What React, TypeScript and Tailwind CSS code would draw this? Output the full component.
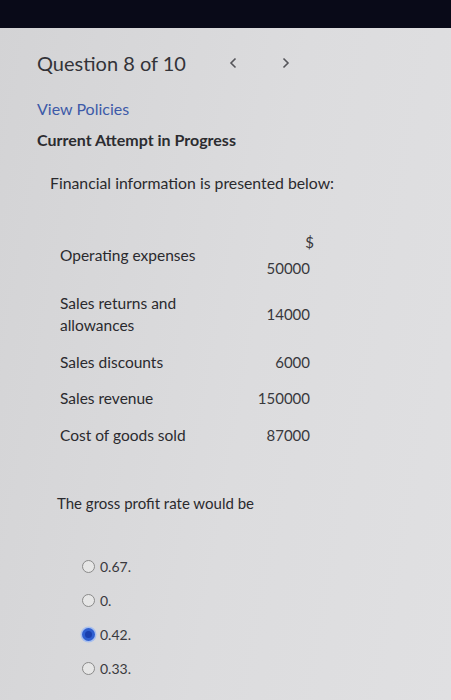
const rows = [
  { label: ['Operating expenses'], value: '50000', dollar: true },
  { label: ['Sales returns and', 'allowances'], value: '14000' },
  { label: ['Sales discounts'], value: '6000' },
  { label: ['Sales revenue'], value: '150000' },
  { label: ['Cost of goods sold'], value: '87000' },
];

const rowClass = [
  'h-[44px] mb-[15px]',
  'h-[44px] mb-[14px]',
  'h-[24px] mb-[12px]',
  'h-[24px] mb-[13px]',
  'h-[24px]',
];

const options = [
  { text: '0.67.', checked: false },
  { text: '0.', checked: false },
  { text: '0.42.', checked: true },
  { text: '0.33.', checked: false },
];

function Radio({ checked }: { checked: boolean }) {
  return (
    <span
      className={
        checked
          ? 'w-[13px] h-[13px] rounded-full border-[3px] border-[#2f5fd0] bg-[#1a3fae] shadow-[0_0_0_1.5px_#a9c0ee]'
          : 'w-[13px] h-[13px] rounded-full border border-[#8a8a8a] bg-[#e6e6e6]'
      }
    />
  );
}

function Chevron({ dir }: { dir: 'left' | 'right' }) {
  return (
    <svg viewBox="0 0 8 12" className="w-[8px] h-[12px]" fill="none" stroke="#55555a" strokeWidth="1.6">
      <path d={dir === 'left' ? 'M6.5 1.5 2 6l4.5 4.5' : 'M1.5 1.5 6 6l-4.5 4.5'} />
    </svg>
  );
}

export default function App() {
  return (
    <div
      className="w-[451px] h-[700px] overflow-hidden bg-[linear-gradient(100deg,#d3d3d5_0%,#dcdcde_55%,#e0e0e2_100%)] text-[#2a2a2e]"
      style={{ fontFamily: 'Lato, "Open Sans", sans-serif' }}
    >
      <div className="h-[28px] bg-[#090a18]" />

      <div className="flex items-center pl-[37px] mt-[21px] h-[28px]">
        <h1 className="text-[20px] leading-none text-[#333338]">Question 8 of 10</h1>
        <span className="ml-[43px]">
          <Chevron dir="left" />
        </span>
        <span className="ml-[45px]">
          <Chevron dir="right" />
        </span>
      </div>

      <div className="pl-[37px] mt-[24px] text-[16px] leading-none text-[#3d5aa8]">View Policies</div>
      <div className="pl-[37px] mt-[15px] text-[16px] leading-none font-bold text-[#2c2c30]">
        Current Attempt in Progress
      </div>

      <p className="pl-[50px] mt-[27px] text-[15.8px] leading-none">Financial information is presented below:</p>

      <div className="ml-[60px] mt-[42px] w-[250px] flex flex-col text-[15.5px]">
        {rows.map((r, i) => (
          <div key={i} className={'flex items-center justify-between ' + rowClass[i]}>
            <div className="leading-[22px]">
              {r.label.map((l) => (
                <div key={l}>{l}</div>
              ))}
            </div>
            <div className="flex flex-col items-end leading-[26px] text-[#38383c] text-[15px]">
              {r.dollar && <span className="-mr-[4px]">$</span>}
              <span>{r.value}</span>
            </div>
          </div>
        ))}
      </div>

      <p className="pl-[57px] mt-[49px] text-[15px] leading-none">The gross profit rate would be</p>

      <div className="pl-[82px] mt-[48px] flex flex-col gap-[18px] text-[14px] text-[#3a3a3e]">
        {options.map((o) => (
          <label key={o.text} className="flex items-center gap-[5px] h-[16px]">
            <Radio checked={o.checked} />
            <span>{o.text}</span>
          </label>
        ))}
      </div>
    </div>
  );
}
